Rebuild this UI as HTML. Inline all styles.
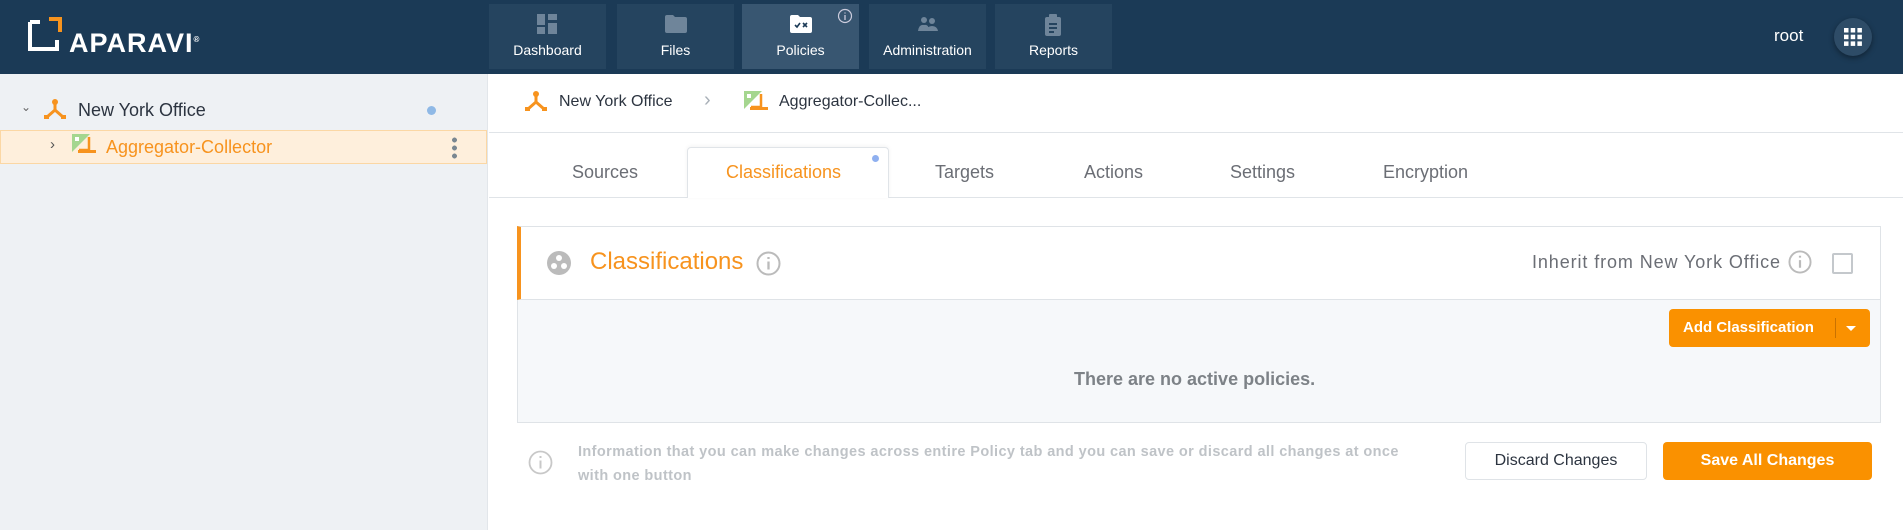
<!DOCTYPE html>
<html><head><meta charset="utf-8"><style>
*{box-sizing:border-box;margin:0;padding:0}
body{width:1903px;height:530px;overflow:hidden;font-family:"Liberation Sans",sans-serif;background:#fff;position:relative}
.hdr{position:absolute;left:0;top:0;width:1903px;height:74px;background:#1b3a56}
.nav{position:absolute;top:4px;width:117px;height:65px;background:#25445f;color:#fff;font-size:14px;text-align:center}
.nav.act{background:#385671}
.nav svg{position:absolute;left:48px;top:10px}
.nav span{position:absolute;left:0;right:0;top:38px}
.side{position:absolute;left:0;top:74px;width:488px;height:456px;background:#eef1f4;border-right:1px solid #e2e6ea}
.abs{position:absolute}
.tab{position:absolute;top:162px;font-size:18px;color:#6b6e75}
</style></head><body>
<div class="hdr">
  <svg class="abs" style="left:27px;top:16px" width="36" height="36" viewBox="0 0 36 36"><path d="M3 6 V33 H30 V24" fill="none" stroke="#fff" stroke-width="4"/><path d="M3 6 H13" fill="none" stroke="#fff" stroke-width="4"/><path d="M22 3 H33 V16" fill="none" stroke="#f7931e" stroke-width="4"/></svg>
  <div class="abs" style="left:69px;top:28px;color:#fff;font-size:27px;font-weight:bold;letter-spacing:1px">APARAVI<sup style="font-size:8px">®</sup></div>
  <div class="nav" style="left:489px"><svg width="20" height="20" viewBox="0 0 20 20" fill="#6f859a"><rect x="0" y="0" width="8" height="11"/><rect x="11" y="0" width="9" height="6"/><rect x="0" y="13" width="8" height="7"/><rect x="11" y="9" width="9" height="11"/></svg><span>Dashboard</span></div>
  <div class="nav" style="left:617px"><svg width="22" height="20" viewBox="0 0 22 20" fill="#6f859a"><path d="M0 3 Q0 1 2 1 H8 L10 3 H20 Q22 3 22 5 V17 Q22 19 20 19 H2 Q0 19 0 17Z"/></svg><span>Files</span></div>
  <div class="nav act" style="left:742px"><svg width="22" height="20" viewBox="0 0 22 20"><path d="M0 3 Q0 1 2 1 H8 L10 3 H20 Q22 3 22 5 V17 Q22 19 20 19 H2 Q0 19 0 17Z" fill="#fff"/><path d="M5 11 L7 13 L10 9 M13 9 L17 13 M17 9 L13 13" stroke="#1b3a56" stroke-width="1.6" fill="none"/></svg><span>Policies</span>
    <svg style="left:95px;top:4px" width="16" height="16" viewBox="0 0 16 16"><circle cx="8" cy="8" r="6.5" fill="none" stroke="#ccd" stroke-width="1.2"/><path d="M8 7 V12 M8 4.5 V5.5" stroke="#ccd" stroke-width="1.3"/></svg></div>
  <div class="nav" style="left:869px"><svg width="22" height="20" viewBox="0 0 22 20" fill="#6f859a"><circle cx="7" cy="6" r="3"/><circle cx="15" cy="7" r="3"/><path d="M1 17 Q2 10 7 11 Q12 10 12 17Z M10 17 Q10 12 15 12 Q20 12 21 17Z"/></svg><span>Administration</span></div>
  <div class="nav" style="left:995px"><svg width="20" height="22" viewBox="0 0 20 22" fill="#6f859a"><rect x="2" y="3" width="16" height="19" rx="2"/><rect x="6" y="0" width="8" height="5" rx="1"/><path d="M6 10 H14 M6 14 H14 M6 18 H11" stroke="#25445f" stroke-width="2"/></svg><span>Reports</span></div>
  <div class="abs" style="left:1774px;top:26px;color:#fff;font-size:17px">root</div>
  <div class="abs" style="left:1834px;top:18px;width:38px;height:38px;border-radius:50%;background:#2e4c67;box-shadow:0 2px 6px rgba(0,0,0,.4)">
    <svg class="abs" style="left:10px;top:10px" width="18" height="18" viewBox="0 0 18 18" fill="#fff"><rect x="0" y="0" width="4.5" height="4.5"/><rect x="6.7" y="0" width="4.5" height="4.5"/><rect x="13.4" y="0" width="4.5" height="4.5"/><rect x="0" y="6.7" width="4.5" height="4.5"/><rect x="6.7" y="6.7" width="4.5" height="4.5"/><rect x="13.4" y="6.7" width="4.5" height="4.5"/><rect x="0" y="13.4" width="4.5" height="4.5"/><rect x="6.7" y="13.4" width="4.5" height="4.5"/><rect x="13.4" y="13.4" width="4.5" height="4.5"/></svg></div>
</div>
<div class="side">
  <div class="abs" style="left:21px;top:26px;color:#666;font-size:12px">⌄</div>
  <svg class="abs" style="left:44px;top:24px" width="22" height="22" viewBox="0 0 22 22"><circle cx="11" cy="4" r="3" fill="#f7931e"/><path d="M11 4 V12 L3 19 M11 12 L19 19" stroke="#f7931e" stroke-width="3" fill="none"/><rect x="0" y="17" width="5" height="4" fill="#f7931e"/><rect x="17" y="17" width="5" height="4" fill="#f7931e"/></svg>
  <div class="abs" style="left:78px;top:26px;font-size:18px;color:#2c3440">New York Office</div>
  <div class="abs" style="left:427px;top:32px;width:9px;height:9px;border-radius:50%;background:#8fb9e6"></div>
  <div class="abs" style="left:0;top:56px;width:487px;height:34px;background:#feefdc;border:1px solid #fbd7a4"></div>
  <div class="abs" style="left:50px;top:62px;color:#555;font-size:15px">›</div>
  <svg class="abs" style="left:72px;top:60px" width="24" height="20" viewBox="0 0 24 20"><path d="M0 0 H18 L0 18Z" fill="#a5d68f"/><rect x="3" y="3" width="4" height="4" fill="#fff"/><path d="M17 3 V16 H7" stroke="#f7931e" stroke-width="2.5" fill="none"/><rect x="6" y="16" width="18" height="3" fill="#f7931e"/></svg>
  <div class="abs" style="left:106px;top:63px;font-size:18px;color:#f7931e">Aggregator-Collector</div>
  <div class="abs" style="left:452px;top:62px;width:5px;height:23px;background:radial-gradient(circle,#7a8791 2.3px,transparent 2.6px) 0 0/5px 8px"></div>
</div>
<svg class="abs" style="left:525px;top:90px" width="22" height="22" viewBox="0 0 22 22"><circle cx="11" cy="4" r="3" fill="#f7931e"/><path d="M11 4 V12 L3 19 M11 12 L19 19" stroke="#f7931e" stroke-width="3" fill="none"/><rect x="0" y="17" width="5" height="4" fill="#f7931e"/><rect x="17" y="17" width="5" height="4" fill="#f7931e"/></svg>
<div class="abs" style="left:559px;top:93px;font-size:16px;color:#2c3440">New York Office</div>
<div class="abs" style="left:704px;top:89px;font-size:20px;color:#a9b0b8">›</div>
<svg class="abs" style="left:744px;top:91px" width="24" height="20" viewBox="0 0 24 20"><path d="M0 0 H18 L0 18Z" fill="#a5d68f"/><rect x="3" y="3" width="4" height="4" fill="#fff"/><path d="M17 3 V16 H7" stroke="#f7931e" stroke-width="2.5" fill="none"/><rect x="6" y="16" width="18" height="3" fill="#f7931e"/></svg>
<div class="abs" style="left:779px;top:93px;font-size:16px;color:#2c3440">Aggregator-Collec...</div>
<div class="abs" style="left:489px;top:132px;width:1414px;height:1px;background:#e0e4e8"></div>
<div class="abs" style="left:489px;top:197px;width:1414px;height:1px;background:#e0e4e8"></div>
<div class="abs" style="left:687px;top:147px;width:202px;height:51px;background:#fff;border:1px solid #e0e4e8;border-bottom:none;border-radius:4px 4px 0 0;box-shadow:0 -1px 4px rgba(0,0,0,.05)"></div>
<div class="abs" style="left:872px;top:155px;width:7px;height:7px;border-radius:50%;background:#8fb0f0"></div>
<div class="tab" style="left:572px">Sources</div>
<div class="tab" style="left:726px;color:#f7931e">Classifications</div>
<div class="tab" style="left:935px">Targets</div>
<div class="tab" style="left:1084px">Actions</div>
<div class="tab" style="left:1230px">Settings</div>
<div class="tab" style="left:1383px">Encryption</div>
<div class="abs" style="left:517px;top:226px;width:1364px;height:197px;border:1px solid #dfe3e7;background:#f6f8fa"></div>
<div class="abs" style="left:517px;top:226px;width:1364px;height:74px;background:#fff;border:1px solid #dfe3e7;border-left:4px solid #f7931e"></div>
<svg class="abs" style="left:547px;top:251px" width="24" height="24" viewBox="0 0 24 24"><circle cx="12" cy="12" r="12" fill="#bbb"/><circle cx="12" cy="7" r="3" fill="#fff"/><circle cx="7" cy="15" r="3" fill="#fff"/><circle cx="17" cy="15" r="3" fill="#fff"/></svg>
<div class="abs" style="left:590px;top:248px;font-size:24px;color:#f7931e">Classifications</div>
<svg class="abs" style="left:756px;top:251px" width="25" height="25" viewBox="0 0 25 25"><circle cx="12.5" cy="12.5" r="11" fill="none" stroke="#bbb" stroke-width="2"/><path d="M12.5 10.5 V18.5 M12.5 6 V8" stroke="#bbb" stroke-width="2.3"/></svg>
<div class="abs" style="left:1532px;top:252px;font-size:18px;color:#6b6e75;letter-spacing:0.9px">Inherit from New York Office</div>
<svg class="abs" style="left:1788px;top:250px" width="24" height="24" viewBox="0 0 25 25"><circle cx="12.5" cy="12.5" r="11" fill="none" stroke="#bbb" stroke-width="2"/><path d="M12.5 10.5 V18.5 M12.5 6 V8" stroke="#bbb" stroke-width="2.3"/></svg>
<div class="abs" style="left:1832px;top:253px;width:21px;height:21px;border:2px solid #c4c8cc;border-radius:2px"></div>
<div class="abs" style="left:1669px;top:309px;width:201px;height:38px;background:#fa9100;border-radius:4px;color:#fff;font-weight:bold;font-size:15px"><span class="abs" style="left:14px;top:10px">Add Classification</span><div class="abs" style="left:166px;top:9px;width:1px;height:20px;background:#c97200"></div><div class="abs" style="left:177px;top:17px;border:5px solid transparent;border-top:5px solid #fff"></div></div>
<div class="abs" style="left:1074px;top:369px;font-size:18px;font-weight:bold;color:#7d8287">There are no active policies.</div>
<svg class="abs" style="left:528px;top:450px" width="25" height="25" viewBox="0 0 25 25"><circle cx="12.5" cy="12.5" r="11" fill="none" stroke="#c8c8c8" stroke-width="1.8"/><path d="M12.5 10.5 V18.5 M12.5 6 V8" stroke="#c8c8c8" stroke-width="2"/></svg>
<div class="abs" style="left:578px;top:440px;white-space:nowrap;font-size:14.5px;font-weight:bold;color:#bfc3c7;line-height:24px;letter-spacing:0.4px">Information that you can make changes across entire Policy tab and you can save or discard all changes at once<br>with one button</div>
<div class="abs" style="left:1465px;top:442px;width:182px;height:38px;border:1px solid #dfe3e7;border-radius:4px;font-size:16px;color:#2c3440;text-align:center;line-height:36px">Discard Changes</div>
<div class="abs" style="left:1663px;top:442px;width:209px;height:38px;background:#fa9100;border-radius:4px;font-size:16px;font-weight:bold;color:#fff;text-align:center;line-height:38px">Save All Changes</div>
</body></html>
